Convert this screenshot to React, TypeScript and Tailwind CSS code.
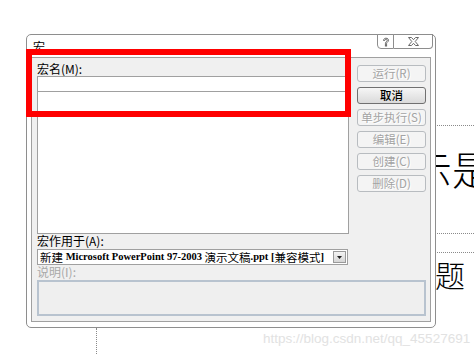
import React from "react";

const cjk = "font-['Noto_Sans_CJK_SC','Noto_Sans',sans-serif]";

function DlgButton({ label, primary }: { label: string; primary?: boolean }) {
    if (primary) {
        return (
            <div className="h-[17px] flex items-center justify-center rounded-[3px] border border-[#707070] bg-gradient-to-b from-[#f6f6f6] to-[#dadada] text-[11.5px] leading-none text-black font-medium">
                {label}
            </div>
        );
    }
    return (
        <div className="h-[17px] flex items-center justify-center rounded-[3px] border border-[#b8bcc0] bg-[#f4f4f4] text-[11.5px] leading-none text-[#a3a3a3] [text-shadow:1px_1px_0_#ffffff]">
            {label}
        </div>
    );
}

function TitleButtons() {
    return (
        <div className="flex -mt-[1px] -mr-[2px] h-[15px]">
            <div className="w-[17px] flex items-center justify-center border border-[#8d8d8d] rounded-bl-[4px] bg-white">
                <svg width="8" height="10" viewBox="0 0 8 10" fill="none" stroke="#6a6a6a" strokeWidth="1">
                    <path d="M1.5 3.5 C1.5 0.5 6.5 0.5 6.5 3.2 C6.5 5 4.6 5 4.6 6.6 L3.4 6.6 C3.4 4.4 5.3 4.5 5.3 3.2 C5.3 1.9 2.7 1.9 2.7 3.5 Z" />
                    <rect x="3.4" y="7.6" width="1.2" height="1.4" />
                </svg>
            </div>
            <div className="w-[39px] flex items-center justify-center border border-l-0 border-[#8d8d8d] rounded-br-[4px] bg-white">
                <svg width="11" height="9" viewBox="0 0 11 9" fill="none" stroke="#6a6a6a" strokeWidth="1">
                    <path d="M0.5 0.5 H3.5 L5.5 2.7 L7.5 0.5 H10.5 L7.2 4.5 L10.5 8.5 H7.5 L5.5 6.3 L3.5 8.5 H0.5 L3.8 4.5 Z" />
                </svg>
            </div>
        </div>
    );
}

function MacroDialog() {
    return (
        <div className={`relative z-10 w-[410px] h-[294px] shrink-0 flex flex-col rounded-[5px] border border-[#8e8e8e] bg-white px-[4px] pb-[5px] text-[12px] text-black ${cjk}`}>
            {/* 标题栏 */}
            <div className="h-[22px] flex items-start justify-between">
                <span className="pl-[2px] pt-[5px] leading-[14px]">宏</span>
                <TitleButtons />
            </div>

            {/* 主体 */}
            <div className="flex-1 flex flex-col border border-[#a0a0a0] bg-[#f0f0f0] pl-[5px] pr-[4px] pb-[3px]">
                <div className="flex gap-[8px]">
                    <div className="w-[312px] flex flex-col pt-[4px]">
                        <div className="h-[14px] leading-[14px]">宏名(M):</div>
                        <div className="h-[16px] border border-[#a0a0a0] bg-white"></div>
                        <div className="h-[142px] border border-t-0 border-[#a0a0a0] bg-white"></div>
                    </div>
                    <div className="w-[69px] flex flex-col gap-[5px] pt-[7px]">
                        <DlgButton label="运行(R)" />
                        <DlgButton label="取消" primary />
                        <DlgButton label="单步执行(S)" />
                        <DlgButton label="编辑(E)" />
                        <DlgButton label="创建(C)" />
                        <DlgButton label="删除(D)" />
                    </div>
                </div>

                <div className="h-[14px] leading-[14px]">宏作用于(A):</div>
                <div className="mt-[1px] w-[311px] h-[16px] flex items-center border border-[#a0a0a0] bg-white pl-[2px]">
                    <div className="flex-1 flex items-center whitespace-nowrap text-[11.5px] leading-[12px]">
                        <span>新建</span>
                        <span className="font-['Liberation_Serif',serif] text-[10.5px] font-bold">&nbsp;Microsoft PowerPoint 97-2003&nbsp;</span>
                        <span>演示文稿</span>
                        <span className="font-['Liberation_Serif',serif] text-[10.5px] font-bold">.ppt [</span>
                        <span>兼容模式</span>
                        <span className="font-['Liberation_Serif',serif] text-[10.5px] font-bold">]</span>
                    </div>
                    <div className="w-[13px] h-[12px] mr-[1px] flex items-center justify-center border border-[#9a9a9a] bg-gradient-to-b from-[#f4f4f4] to-[#d6d6d6]">
                        <svg width="5" height="3" viewBox="0 0 5 3"><path d="M0 0 H5 L2.5 3 Z" fill="#222" /></svg>
                    </div>
                </div>
                <div className="h-[14px] leading-[14px] text-[#a8a8a8]">说明(I):</div>
                <div className="mt-[1px] h-[36px] border-2 border-[#b8c3cf] bg-[#efefef]"></div>
            </div>
        </div>
    );
}

function SlideStrip() {
    return (
        <div className={`flex-1 flex flex-col text-black ${cjk}`}>
            <div className="mt-[91px] ml-[1px] border-t border-dotted border-[#8a8a8a]"></div>
            <div className="mt-[22px] -ml-[24px] whitespace-nowrap text-[40px] leading-[40px] font-light">示是</div>
            <div className="mt-[45px] ml-[1px] border-t border-dotted border-[#8a8a8a]"></div>
            <div className="mt-[18px] ml-[1px] border-t border-dotted border-[#8a8a8a]"></div>
            <div className="mt-[6px] -ml-[1px] whitespace-nowrap text-[30px] leading-[30px] font-light">题</div>
        </div>
    );
}

export default function App() {
    return (
        <div className="relative w-[474px] h-[355px] overflow-hidden bg-white">
            <div className="flex pt-[34px] pl-[26px]">
                <MacroDialog />
                <SlideStrip />
            </div>
            <div className="ml-[96px] h-[28px] border-l border-dotted border-[#8a8a8a]"></div>

            {/* 红色标注框 */}
            <div className="absolute left-[26px] top-[49px] w-[325px] h-[68px] border-[6px] border-[#ff0000] z-20"></div>

            {/* 水印 */}
            <div className="absolute left-[263px] top-[331px] text-[13.5px] leading-[16px] text-[#e2e2e2] font-['Liberation_Sans',sans-serif] whitespace-nowrap">
                https://blog.csdn.net/qq_45527691
            </div>
        </div>
    );
}
